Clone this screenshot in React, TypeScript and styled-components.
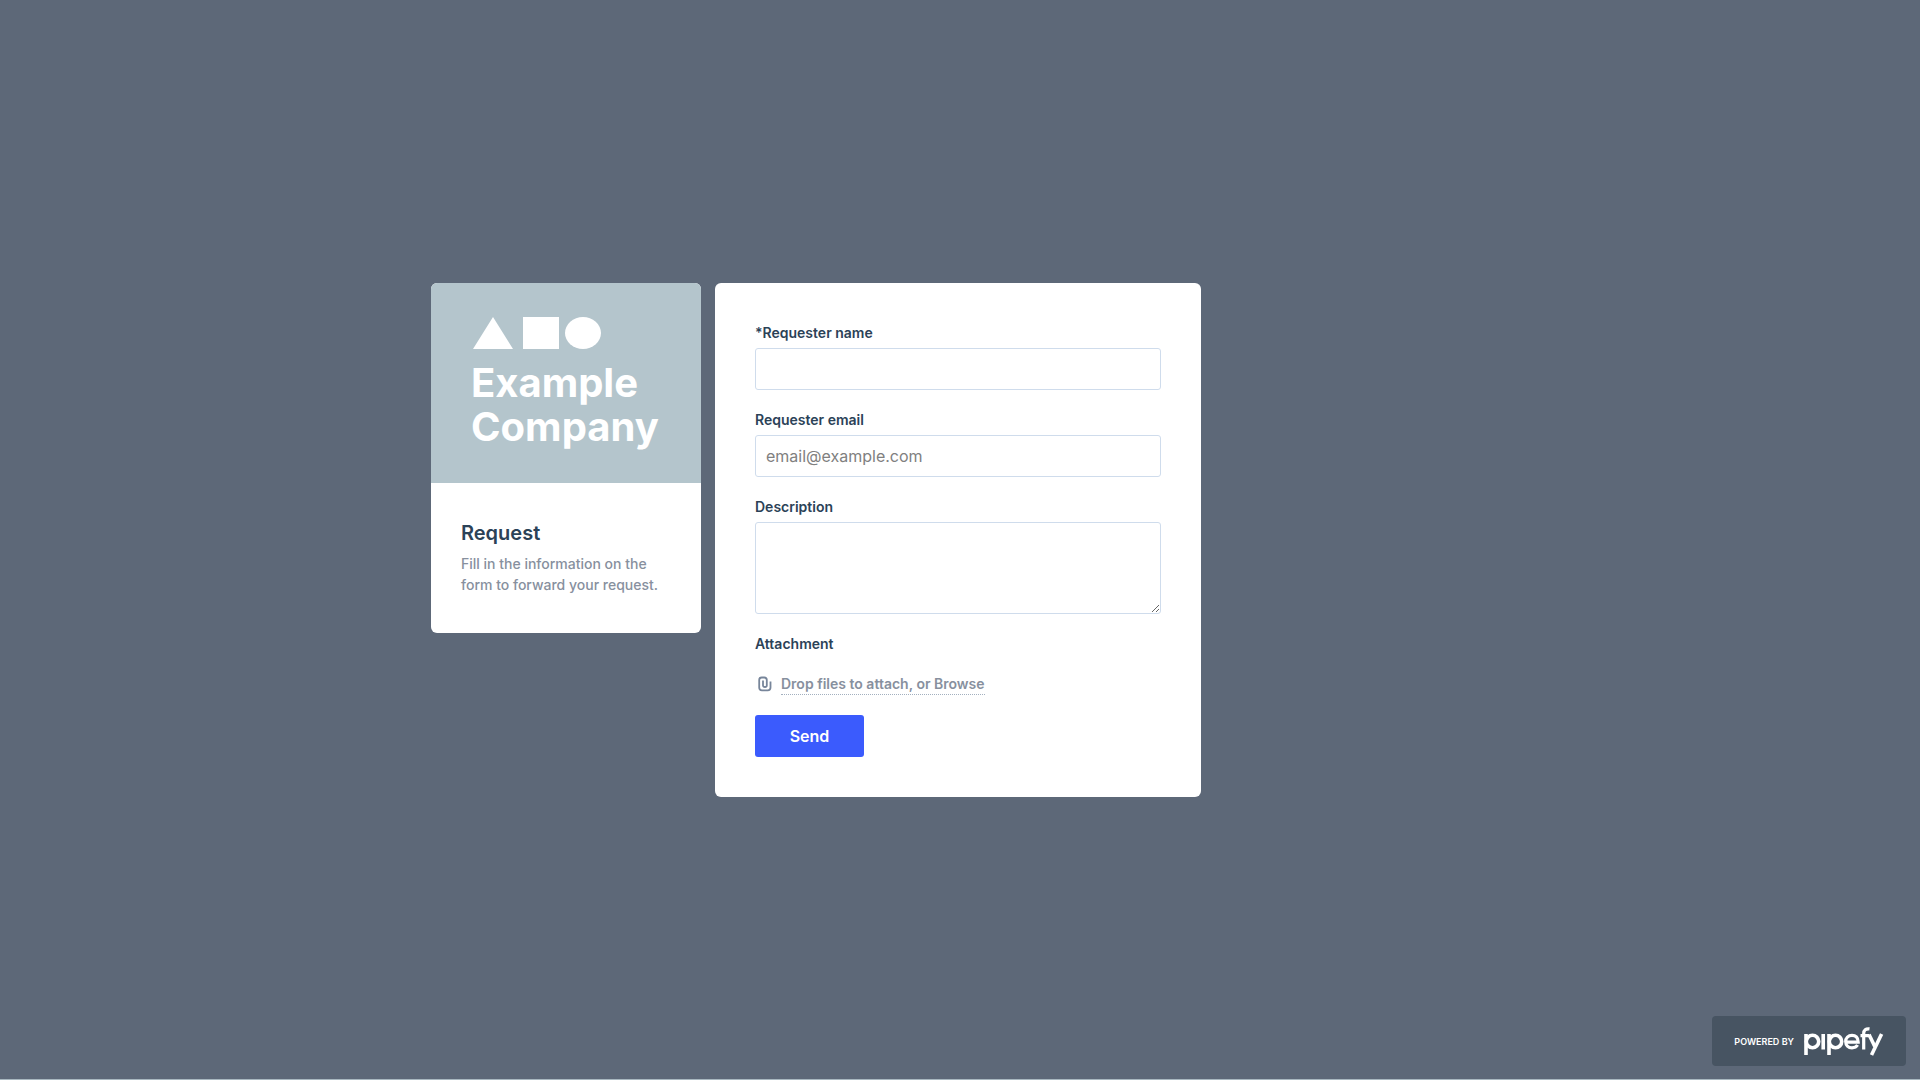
import { useState } from "react";
import styled, { createGlobalStyle } from "styled-components";

const GlobalStyle = createGlobalStyle`
  *, *::before, *::after { box-sizing: border-box; }
  body {
    margin: 0;
    background: #5d6878;
    color: #2b4257;
    font-family: Inter, "Liberation Sans", sans-serif;
  }
`;

const Page = styled.div`
  min-height: 100vh;
  display: flex;
  align-items: center;
  justify-content: center;
  border-bottom: 1px solid #a9b8c0;
`;

const Content = styled.main`
  width: 100%;
  max-width: 1058px;
  display: grid;
  grid-template-columns: 270px minmax(0, 486px);
  align-items: start;
  gap: 14px;
`;

const Card = styled.section`
  background: #fff;
  border-radius: 6px;
  overflow: hidden;
`;

const Banner = styled.div`
  height: 200px;
  padding: 34px 40px;
  background: #b4c5cc;
  color: #fff;
`;

const Shapes = styled.svg`
  display: block;
  margin-bottom: 12px;
`;

const Company = styled.div`
  font-size: 40px;
  font-weight: 700;
  line-height: 44px;
`;

const Intro = styled.div`
  padding: 36px 30px 38px;
`;

const Title = styled.h1`
  margin: 0 0 6px;
  font-size: 20px;
  font-weight: 600;
  line-height: 28px;
`;

const Lead = styled.p`
  margin: 0;
  color: #87909e;
  font-size: 14px;
  font-weight: 500;
  line-height: 21px;
`;

const Form = styled.form`
  display: flex;
  flex-direction: column;
  align-items: stretch;
  padding: 40px;
`;

const Field = styled.div`
  display: flex;
  flex-direction: column;
  gap: 5px;
  margin-bottom: 20px;
`;

const Label = styled.label`
  font-size: 14px;
  font-weight: 600;
  line-height: 20px;
`;

const TextInput = styled.input`
  width: 100%;
  height: 42px;
  padding: 0 10px;
  border: 1px solid #cfdcec;
  border-radius: 3px;
  font: 400 16px/24px Inter, "Liberation Sans", sans-serif;
  color: #2b4257;
  &::placeholder { color: #808080; opacity: 1; }
`;

const TextArea = styled.textarea`
  display: block;
  width: 100%;
  height: 92px;
  padding: 8px 10px;
  border: 1px solid #cfdcec;
  border-radius: 3px;
  resize: vertical;
  font: 400 16px/24px Inter, "Liberation Sans", sans-serif;
  color: #2b4257;
`;

const AttachButton = styled.button`
  align-self: flex-start;
  display: flex;
  align-items: center;
  gap: 8px;
  margin-top: 15px;
  padding: 0 0 0 2px;
  border: 0;
  background: none;
  color: #87909e;
  font: 600 14px/20px Inter, "Liberation Sans", sans-serif;
  cursor: pointer;
`;

const AttachText = styled.span`
  border-bottom: 1px dotted #a3b0bf;
`;

const SendButton = styled.button`
  align-self: flex-start;
  width: 109px;
  height: 42px;
  border: 0;
  border-radius: 3px;
  background: #3b5bfd;
  color: #fff;
  font: 600 16px/24px Inter, "Liberation Sans", sans-serif;
  cursor: pointer;
`;

const PoweredBy = styled.a`
  position: fixed;
  right: 14px;
  bottom: 14px;
  display: flex;
  align-items: center;
  gap: 10px;
  height: 50px;
  padding: 0 22px;
  border-radius: 4px;
  background: #475462;
  color: #fff;
  font-size: 9px;
  font-weight: 600;
  text-decoration: none;
`;

const fields = [
  { id: "name", label: "*Requester name", type: "text", placeholder: "", required: true },
  { id: "email", label: "Requester email", type: "email", placeholder: "email@example.com", required: false },
];

function PipefyLogo() {
  return (
    <svg width="80" height="30" viewBox="0 0 80 30" fill="none" stroke="#fff" strokeWidth="3.6" role="img" aria-label="pipefy">
      <path d="M2 8V29" />
      <circle cx="8.5" cy="15.5" r="6.2" />
      <path d="M19.200 8V23.500" />
      <path d="M25 8V29" />
      <circle cx="31.500" cy="15.500" r="6.2" />
      <path d="M41.500 16.200H54.200C54.200 11.500 51.500 9.300 48 9.300C44.300 9.300 41.700 12 41.700 15.500C41.700 19.200 44.300 21.800 48 21.800C50.600 21.800 52.400 20.900 53.600 19" strokeWidth="3.2" />
      <path d="M59.700 23.500V7.500C59.700 4.200 61.800 2.400 65.500 2.900M56.500 9.600H65" strokeWidth="3.2" />
      <path d="M65 8.500L70.800 20.500" strokeWidth="3.6" />
      <path d="M77.600 8L67.500 29" strokeWidth="3.6" />
    </svg>
  );
}

export default function App() {
  const [values, setValues] = useState<Record<string, string>>({});
  const update = (id: string, value: string) => setValues((old) => ({ ...old, [id]: value }));

  return (
    <>
      <GlobalStyle />
      <Page>
        <Content>
          <Card>
            <Banner>
              <Shapes width="132" height="32" viewBox="0 0 132 32" fill="#fff" aria-hidden="true">
                <path d="M22 0L42 32H2Z" />
                <path d="M52 0H88V32H52Z" />
                <ellipse cx="112" cy="16" rx="18" ry="16" />
              </Shapes>
              <Company>Example<br />Company</Company>
            </Banner>
            <Intro>
              <Title>Request</Title>
              <Lead>Fill in the information on the form to forward your request.</Lead>
            </Intro>
          </Card>
          <Card>
            <Form onSubmit={(event) => event.preventDefault()}>
              {fields.map((field) => (
                <Field key={field.id}>
                  <Label htmlFor={field.id}>{field.label}</Label>
                  <TextInput
                    id={field.id}
                    type={field.type}
                    placeholder={field.placeholder}
                    required={field.required}
                    value={values[field.id] ?? ""}
                    onChange={(event) => update(field.id, event.target.value)}
                  />
                </Field>
              ))}
              <Field>
                <Label htmlFor="description">Description</Label>
                <TextArea
                  id="description"
                  value={values.description ?? ""}
                  onChange={(event) => update("description", event.target.value)}
                />
              </Field>
              <Field>
                <Label htmlFor="attachment">Attachment</Label>
                <AttachButton id="attachment" type="button">
                  <svg width="16" height="16" viewBox="0 0 16 16" fill="none" stroke="#77859a" strokeWidth="1.8" aria-hidden="true">
                    <path d="M6 4.500V9.500Q6 11 8 11Q9.800 11 9.800 9.500V4Q9.800 1.500 7.300 1.500H4.700Q2.200 1.500 2.200 4V11.500Q2.200 14.300 5 14.300H10.700Q13.500 14.300 13.500 11.500V5.500" />
                  </svg>
                  <AttachText>Drop files to attach, or Browse</AttachText>
                </AttachButton>
              </Field>
              <SendButton type="submit">Send</SendButton>
            </Form>
          </Card>
        </Content>
      </Page>
      <PoweredBy href="#pipefy">
        POWERED BY
        <PipefyLogo />
      </PoweredBy>
    </>
  );
}
